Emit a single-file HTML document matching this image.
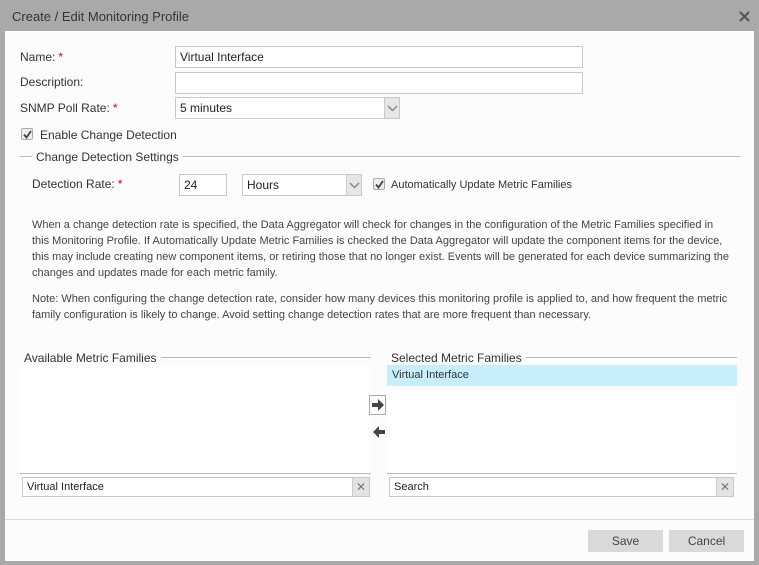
<!DOCTYPE html><html><head><style>
*{box-sizing:border-box;margin:0;padding:0}
body{width:759px;height:565px;background:#a9a9a9;font-family:"Liberation Sans",Arial,sans-serif;font-size:12px;color:#333;position:relative;overflow:hidden}
.a{position:absolute}
.body{left:5px;top:31px;width:749px;height:530px;background:#fcfcfc}
.inp{position:absolute;background:#fff;border:1px solid #c8c8c8;height:22px;padding:3px 4px;font-size:12px;color:#222}
.dd{position:absolute;width:15px;right:0;top:0;bottom:0;background:#e6e6e6;border-left:1px solid #ccc}
.lab{position:absolute;font-size:12px;color:#333}
.req{color:#d00;margin-left:3px}
.cb{position:absolute;width:12px;height:12px;border:1px solid #aaa;background:#eee;border-radius:2px}
.cb svg{position:absolute;left:1px;top:1px}
.p{position:absolute;font-size:11px;line-height:16px;color:#444}
.btn{position:absolute;background:#d9d9d9;height:22px;font-size:12px;text-align:center;line-height:22px;color:#444}
.x{position:absolute;right:0;top:0;bottom:0;width:17px;background:#e3e3e3;border-left:1px solid #ccc;text-align:center;line-height:18px;color:#777;font-size:12px}
.s{font-size:11px;padding:3px 4px;height:20px}
</style></head><body>
<div class="a" style="left:12px;top:9px;font-size:13px;color:#333">Create / Edit Monitoring Profile</div>
<svg class="a" style="left:739px;top:11px" width="11" height="11"><path d="M1 1L10 10M10 1L1 10" stroke="#555" stroke-width="2"/></svg>
<div class="a body"></div>
<div class="lab" style="left:20px;top:50px">Name:<span class="req">*</span></div>
<div class="inp" style="left:175px;top:46px;width:408px">Virtual Interface</div>
<div class="lab" style="left:20px;top:75px">Description:</div>
<div class="inp" style="left:175px;top:72px;width:408px"></div>
<div class="lab" style="left:20px;top:101px">SNMP Poll Rate:<span class="req">*</span></div>
<div class="inp" style="left:175px;top:97px;width:225px">5 minutes<div class="dd"><svg width="15" height="20"><path d="M3 8l4.5 4.5L12 8" stroke="#888" stroke-width="1.5" fill="none"/></svg></div></div>
<div class="cb" style="left:21px;top:128px"><svg width="9" height="9"><path d="M1 4.5l2.5 3L8 1" stroke="#444" stroke-width="1.8" fill="none"/></svg></div>
<div class="lab" style="left:40px;top:128px">Enable Change Detection</div>
<div class="a" style="left:20px;top:156px;width:12px;border-top:1px solid #bbb"></div>
<div class="lab" style="left:36px;top:150px">Change Detection Settings</div>
<div class="a" style="left:183px;top:156px;width:557px;border-top:1px solid #bbb"></div>
<div class="lab" style="left:32px;top:177px">Detection Rate:<span class="req">*</span></div>
<div class="inp" style="left:179px;top:174px;width:48px">24</div>
<div class="inp" style="left:242px;top:174px;width:120px">Hours<div class="dd"><svg width="15" height="20"><path d="M3 8l4.5 4.5L12 8" stroke="#888" stroke-width="1.5" fill="none"/></svg></div></div>
<div class="cb" style="left:373px;top:178px"><svg width="9" height="9"><path d="M1 4.5l2.5 3L8 1" stroke="#444" stroke-width="1.8" fill="none"/></svg></div>
<div class="a" style="left:391px;top:179px;font-size:11px;color:#333">Automatically Update Metric Families</div>
<div class="p" style="left:32px;top:217px;width:700px">When a change detection rate is specified, the Data Aggregator will check for changes in the configuration of the Metric Families specified in this Monitoring Profile. If Automatically Update Metric Families is checked the Data Aggregator will update the component items for the device, this may include creating new component items, or retiring those that no longer exist. Events will be generated for each device summarizing the changes and updates made for each metric family.</div>
<div class="p" style="left:32px;top:291px;width:705px">Note: When configuring the change detection rate, consider how many devices this monitoring profile is applied to, and how frequent the metric family configuration is likely to change. Avoid setting change detection rates that are more frequent than necessary.</div>
<div class="lab" style="left:24px;top:351px">Available Metric Families</div>
<div class="a" style="left:161px;top:357px;width:210px;border-top:1px solid #bbb"></div>
<div class="a" style="left:20px;top:365px;width:351px;height:109px;background:#fff;border-bottom:1px solid #bbb"></div>
<div class="inp s" style="left:22px;top:477px;width:348px">Virtual Interface<div class="x">✕</div></div>
<div class="lab" style="left:391px;top:351px">Selected Metric Families</div>
<div class="a" style="left:526px;top:357px;width:211px;border-top:1px solid #bbb"></div>
<div class="a" style="left:387px;top:365px;width:350px;height:109px;background:#fff;border-bottom:1px solid #bbb"></div>
<div class="a" style="left:387px;top:365px;width:350px;height:21px;background:#c6eefb;font-size:11px;padding:4px 5px">Virtual Interface</div>
<div class="inp s" style="left:389px;top:477px;width:345px">Search<div class="x">✕</div></div>
<svg class="a" style="left:369px;top:395px" width="18" height="20"><rect x="0.5" y="0.5" width="16" height="19" fill="none" stroke="#557" stroke-dasharray="1,1"/><path d="M3 8h6V4l6 6-6 6v-4H3z" fill="#444"/></svg>
<svg class="a" style="left:370px;top:422px" width="18" height="20"><path d="M15 8H9V4L3 10l6 6v-4h6z" fill="#444"/></svg>
<div class="a" style="left:5px;top:519px;width:749px;border-top:1px solid #ddd"></div>
<div class="btn" style="left:588px;top:530px;width:75px">Save</div>
<div class="btn" style="left:669px;top:530px;width:75px">Cancel</div>
</body></html>
